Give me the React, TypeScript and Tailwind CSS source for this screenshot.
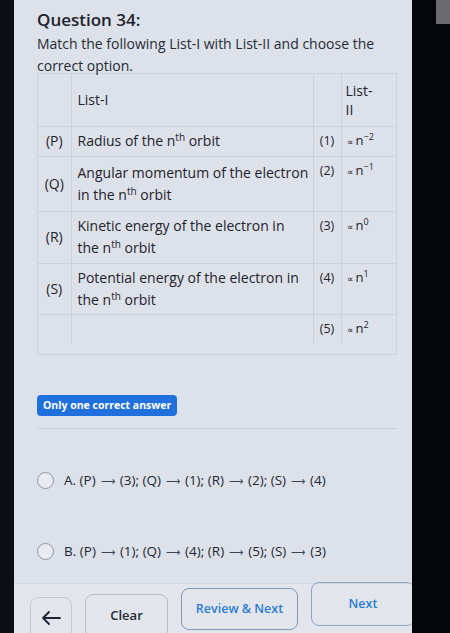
import React from 'react';

const Nth = () => (
  <>
    n<sup className="text-[10px]">th</sup>
  </>
);

const rows = [
  { k: '(P)', text: <>Radius of the <Nth /> orbit</>, n: '(1)', v: '−2', h: 'h-[30px]' },
  { k: '(Q)', text: <>Angular momentum of the electron<br />in the <Nth /> orbit</>, n: '(2)', v: '−1', h: 'h-[55px]' },
  { k: '(R)', text: <>Kinetic energy of the electron in<br />the <Nth /> orbit</>, n: '(3)', v: '0', h: 'h-[52px]' },
  { k: '(S)', text: <>Potential energy of the electron in<br />the <Nth /> orbit</>, n: '(4)', v: '1', h: 'h-[51px]' },
  { k: '', text: null, n: '(5)', v: '2', h: 'h-[30px]' },
];

function Arrow() {
  return <span className="mx-[5px] text-[10px] text-[#3c4350]">⟶</span>;
}

function Option({ letter, pairs }: { letter: string; pairs: string[][] }) {
  return (
    <div className="flex items-center gap-[10px] h-[20px]">
      <div className="w-[17px] h-[17px] rounded-full border-[1.5px] border-[#8e95a3] bg-[#e8ebf2]" />
      <div className="text-[13.5px] leading-[20px] text-[#222833]">
        {letter}.{' '}
        {pairs.map(([a, b], i) => (
          <span key={i}>
            {a}
            <Arrow />
            {b}
            {i < pairs.length - 1 ? '; ' : ''}
          </span>
        ))}
      </div>
    </div>
  );
}

export default function App() {
  const last = rows.length - 1;
  return (
    <div
      className="flex w-[450px] h-[633px] overflow-hidden bg-black"
      style={{ fontFamily: '"Open Sans", "Noto Sans", sans-serif' }}
    >
      {/* left bezel */}
      <div className="w-[14px] bg-[#0c0e14]" />

      {/* screen */}
      <div className="w-[398px] flex flex-col bg-[#dde1ea] text-[#1e232d]">
        <div className="pl-[23px] pr-[16px] pt-[8px]">
          <h1 className="text-[17px] font-semibold leading-[24px]">Question 34:</h1>
          <p className="mt-[1px] text-[14px] leading-[22px] text-[#262b36]">
            Match the following List-I with List-II and choose the correct option.
          </p>

          <div className="-mt-[4px] w-[360px] border border-[#cdd2dd] pb-[10px]">
            <table className="table-fixed border-collapse w-[358px] text-[14px] leading-[22px]">
              <colgroup>
                <col className="w-[33px]" />
                <col className="w-[242px]" />
                <col className="w-[28px]" />
                <col className="w-[55px]" />
              </colgroup>
              <tbody>
                <tr className="h-[52px]">
                  <td className="border-r border-b border-[#cdd2dd]" />
                  <td className="border-r border-b border-[#cdd2dd] px-[6px] font-medium">List-I</td>
                  <td className="border-r border-b border-[#cdd2dd]" />
                  <td className="border-b border-[#cdd2dd] px-[4px] font-medium leading-[19px]">
                    List-
                    <br />
                    II
                  </td>
                </tr>
                {rows.map((r, i) => (
                  <tr key={i} className={r.h}>
                    <td className={`border-r border-[#cdd2dd] text-center ${i < last ? 'border-b' : ''}`}>{r.k}</td>
                    <td className={`border-r border-[#cdd2dd] pl-[6px] pr-[1px] leading-[22px] whitespace-nowrap ${i < last ? 'border-b' : ''}`}>{r.text}</td>
                    <td className={`border-r border-[#cdd2dd] text-center align-top pt-[3px] text-[12.5px] ${i < last ? 'border-b' : ''}`}>{r.n}</td>
                    <td className={`border-[#cdd2dd] align-top pt-[2px] pl-[5px] text-[13px] ${i < last ? 'border-b' : ''}`}>
                      <span className="text-[9px] mr-[3px]">∝</span>n<sup className="text-[9px]">{r.v}</sup>
                    </td>
                  </tr>
                ))}
              </tbody>
            </table>
          </div>

          <div className="mt-[40px] inline-block rounded-[4px] bg-[#1f6fdc] px-[6px] h-[21px] leading-[21px] text-[10.5px] font-bold text-white">
            Only one correct answer
          </div>
          <div className="mt-[12px] h-px bg-[#c6ccd8]" />

          <div className="mt-[41px]">
            <Option letter="A" pairs={[['(P)', '(3)'], ['(Q)', '(1)'], ['(R)', '(2)'], ['(S)', '(4)']]} />
          </div>
          <div className="mt-[51px]">
            <Option letter="B" pairs={[['(P)', '(1)'], ['(Q)', '(4)'], ['(R)', '(5)'], ['(S)', '(3)']]} />
          </div>
        </div>

        {/* bottom bar */}
        <div className="mt-[22px] flex-1 bg-[#e2e5ec] border-t border-[#d3d7e0] flex items-start gap-[13px] pl-[16px]">
          <div className="mt-[13px] w-[42px] h-[42px] shrink-0 rounded-[8px] border border-[#c4c9d4] flex items-center justify-center">
            <svg width="20" height="16" viewBox="0 0 20 16" fill="none" stroke="#1c2230" strokeWidth="1.8" strokeLinecap="round" strokeLinejoin="round">
              <path d="M19 8H2M8 2L2 8l6 6" />
            </svg>
          </div>
          <div className="mt-[10px] w-[83px] h-[44px] shrink-0 rounded-[8px] border border-[#b6bcc8] flex items-center justify-center text-[13px] font-semibold text-[#222833]">
            Clear
          </div>
          <div className="mt-[4px] w-[117px] h-[42px] shrink-0 rounded-[8px] border border-[#7f9ab8] flex items-center justify-center text-[12.5px] font-semibold text-[#2b7cd0]">
            Review &amp; Next
          </div>
          <div className="-mt-[2px] w-[104px] h-[44px] shrink-0 rounded-[8px] border border-[#8fa6c0] flex items-center justify-center text-[12.5px] font-semibold text-[#2b7cd0]">
            Next
          </div>
        </div>
      </div>

      {/* right bezel */}
      <div className="flex-1 bg-[#050608] flex justify-end">
        <div className="w-[14px] h-[24px] bg-[#6b6b6e]" />
      </div>
    </div>
  );
}
